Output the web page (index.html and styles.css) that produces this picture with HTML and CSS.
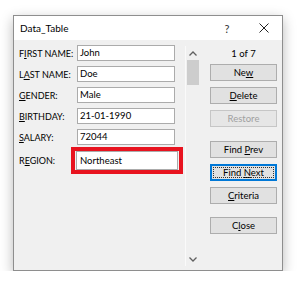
FILE: index.html
```html
<!DOCTYPE html>
<html>
<head>
<meta charset="utf-8">
<link rel="stylesheet" href="styles.css">
</head>
<body>
<div class="dialog">
  <div class="titlebar">
    <span class="title">Data_Table</span>
    <span class="help">?</span>
    <span class="xbtn"><svg width="10" height="10" viewBox="0 0 10 10"><path d="M0.5 0.5 L9.5 9.5 M9.5 0.5 L0.5 9.5" stroke="#222" stroke-width="1" fill="none"/></svg></span>
  </div>
  <div class="content">
    <div class="fields">
      <div class="row"><span class="label">F<u>I</u>RST NAME:</span><span class="input">John</span></div>
      <div class="row"><span class="label">L<u>A</u>ST NAME:</span><span class="input">Doe</span></div>
      <div class="row"><span class="label"><u>G</u>ENDER:</span><span class="input">Male</span></div>
      <div class="row"><span class="label"><u>B</u>IRTHDAY:</span><span class="input">21-01-1990</span></div>
      <div class="row"><span class="label"><u>S</u>ALARY:</span><span class="input">72044</span></div>
      <div class="row row-region"><span class="label">R<u>E</u>GION:</span><span class="highlight"><span class="input input-region">Northeast</span></span></div>
    </div>
    <div class="scrollbar">
      <span class="arrow"><svg width="8" height="5" viewBox="0 0 8 5"><polyline points="0.5,4.5 4,1 7.5,4.5" stroke="#606060" stroke-width="1.3" fill="none"/></svg></span>
      <span class="thumb"></span>
      <span class="track"></span>
      <span class="arrow"><svg width="8" height="5" viewBox="0 0 8 5"><polyline points="0.5,0.5 4,4 7.5,0.5" stroke="#606060" stroke-width="1.3" fill="none"/></svg></span>
    </div>
    <div class="buttons">
      <div class="counter">1 of 7</div>
      <div class="btn">Ne<u>w</u></div>
      <div class="btn"><u>D</u>elete</div>
      <div class="btn btn-disabled">Restore</div>
      <div class="btn btn-gap">Find <u>P</u>rev</div>
      <div class="btn btn-default">Find <u>N</u>ext</div>
      <div class="btn"><u>C</u>riteria</div>
      <div class="btn btn-close">C<u>l</u>ose</div>
    </div>
  </div>
</div>
</body>
</html>
```

FILE: styles.css
```css
html, body {
  margin: 0;
  padding: 0;
  background: #ffffff;
}
body {
  padding: 15px 0 0 13px;
  font-family: Lato, "Noto Sans", sans-serif;
  font-size: 9.5px;
  color: #000;
}
.dialog {
  width: 268px;
  height: 254px;
  border: 1px solid #8e8e8e;
  background: #f0f0f0;
  box-shadow: 0 4px 12px rgba(0, 0, 0, 0.28);
  display: flex;
  flex-direction: column;
}
.titlebar {
  height: 24px;
  background: #ffffff;
  display: flex;
  align-items: center;
  padding-left: 6px;
}
.title {
  flex: 1;
  font-size: 10px;
}
.help {
  width: 12px;
  text-align: center;
  font-size: 11px;
  color: #333;
  margin-right: 26px;
}
.xbtn {
  display: flex;
  width: 10px;
  margin-right: 13px;
}
.content {
  flex: 1;
  display: flex;
  padding: 5px 5px 4px 5px;
}
.fields {
  width: 156px;
  flex: none;
  display: flex;
  flex-direction: column;
  gap: 5px;
}
.row {
  display: flex;
  align-items: center;
  height: 16px;
}
.label {
  width: 58px;
  flex: none;
  white-space: nowrap;
  font-size: 9px;
}
.label u, .btn u {
  text-decoration-thickness: 1px;
  text-underline-offset: 1px;
}
.input {
  width: 94px;
  height: 14px;
  line-height: 14px;
  border: 1px solid #ababab;
  background: #fff;
  padding: 0 0 0 2px;
}
.row-region {
  height: 27px;
  margin-top: -3px;
}
.highlight {
  margin-left: -6px;
  border: 4px solid #e8131f;
  padding: 0 1px;
  height: 19px;
  display: flex;
  align-items: center;
}
.input-region {
  width: 97px;
  height: 17px;
  line-height: 17px;
  padding-left: 3px;
}
.scrollbar {
  width: 13px;
  flex: none;
  margin: 1px 0 0 10px;
  border-left: 1px solid #fafafa;
  display: flex;
  flex-direction: column;
  align-items: center;
  height: 220px;
}
.arrow {
  height: 14px;
  width: 13px;
  display: flex;
  align-items: center;
  justify-content: center;
}
.thumb {
  width: 12px;
  height: 25px;
  background: #cdcdcd;
}
.track {
  flex: 1;
}
.buttons {
  margin-left: 11px;
  width: 67px;
  flex: none;
  display: flex;
  flex-direction: column;
  gap: 6px;
}
.counter {
  height: 14px;
  line-height: 14px;
  margin-top: 2px;
  margin-bottom: -3px;
  text-align: center;
}
.btn {
  height: 15px;
  line-height: 15px;
  border: 1px solid #adadad;
  background: #e1e1e1;
  text-align: center;
  position: relative;
}
.btn-disabled {
  color: #a0a0a0;
  border-color: #c6c6c6;
  background: #e6e6e6;
}
.btn-gap {
  margin-top: 8px;
}
.btn-default {
  border-color: #0078d7;
  box-shadow: inset 0 0 0 1px #0078d7;
}
.btn-default::after {
  content: "";
  position: absolute;
  left: 2px;
  top: 2px;
  right: 2px;
  bottom: 2px;
  border: 1px dotted #333;
}
.btn-close {
  margin-top: 7px;
}
```
